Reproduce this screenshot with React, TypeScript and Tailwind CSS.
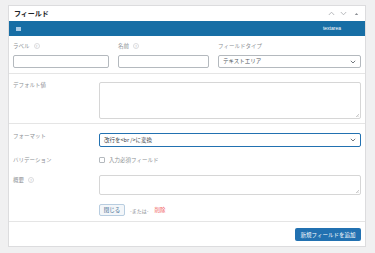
import React from 'react';

const font = { fontFamily: '"Noto Sans CJK JP", "Liberation Sans", sans-serif' };

function Help() {
  return (
    <span className="ml-[4px] inline-flex h-[6px] w-[6px] items-center justify-center rounded-full border border-[#dcdcde] text-[4px] leading-none text-[#b4b9be]">
      ?
    </span>
  );
}

function Chevron() {
  return (
    <svg width="6" height="4" viewBox="0 0 6 4" className="shrink-0">
      <path d="M0.8 0.8 L3 3 L5.2 0.8" fill="none" stroke="#50575e" strokeWidth="0.8" />
    </svg>
  );
}

export default function App() {
  return (
    <div className="min-h-[253px] w-[375px] bg-[#f0f0f1] pt-[5px]" style={font}>
      <div className="ml-[8px] w-[358px] border border-[#dcdcde] bg-white">
        {/* Header */}
        <div className="flex h-[15px] items-center justify-between pl-[5px] pr-[6px]">
          <span className="text-[7px] font-semibold text-[#1d2327]">フィールド</span>
          <div className="flex items-center gap-[5px] text-[#8c8f94]">
            <svg width="7" height="5" viewBox="0 0 7 5">
              <path d="M0.8 4 L3.5 1.2 L6.2 4" fill="none" stroke="#a7aaad" strokeWidth="0.8" />
            </svg>
            <svg width="7" height="5" viewBox="0 0 7 5">
              <path d="M0.8 1 L3.5 3.8 L6.2 1" fill="none" stroke="#a7aaad" strokeWidth="0.8" />
            </svg>
            <svg width="5" height="4" viewBox="0 0 5 4" className="ml-[2px]">
              <path d="M0.8 3 L2.5 1 L4.2 3 Z" fill="#8c8f94" />
            </svg>
          </div>
        </div>

        {/* Blue field bar */}
        <div className="flex h-[15px] items-center justify-between bg-[#176ea5] pl-[7px] pr-[24px]">
          <span className="h-[4px] w-[5px] bg-[#a9cbe6]" />
          <span className="text-[5px] text-white" style={{ fontFamily: '"Liberation Sans", sans-serif' }}>
            textarea
          </span>
        </div>

        {/* Top row */}
        <div className="flex gap-[9px] border-b border-[#e5e5e5] pb-[5px] pl-[4px] pr-[4px] pt-[6px]">
          <div className="w-[96px]">
            <div className="flex h-[8px] items-center text-[5.5px] text-[#8c8f94]">
              ラベル<Help />
            </div>
            <div className="mt-[5px] h-[13px] rounded-[2px] border border-[#b4b9be]" />
          </div>
          <div className="w-[91px]">
            <div className="flex h-[8px] items-center text-[5.5px] text-[#8c8f94]">
              名前<Help />
            </div>
            <div className="mt-[5px] h-[13px] rounded-[2px] border border-[#b4b9be]" />
          </div>
          <div className="w-[143px]">
            <div className="flex h-[8px] items-center text-[5.5px] text-[#8c8f94]">フィールドタイプ</div>
            <div className="mt-[5px] flex h-[13px] items-center justify-between rounded-[2px] border border-[#b4b9be] pl-[4px] pr-[4px] text-[5.5px] text-[#50575e]">
              テキストエリア
              <Chevron />
            </div>
          </div>
        </div>

        {/* Default value */}
        <div className="flex border-b border-[#e5e5e5] pb-[4px] pl-[4px] pr-[4px] pt-[6px]">
          <div className="w-[86px] pt-[1px] text-[5.5px] leading-[8px] text-[#8c8f94]">デフォルト値</div>
          <div className="relative mt-[2px] h-[37px] w-[262px] rounded-[2px] border border-[#d6d6d6]">
            <svg width="4" height="4" viewBox="0 0 4 4" className="absolute bottom-[1px] right-[1px]">
              <path d="M1 4 L4 1 M2.5 4 L4 2.5" stroke="#999" strokeWidth="0.5" />
            </svg>
          </div>
        </div>

        {/* Format */}
        <div className="flex pl-[4px] pr-[4px] pt-[7px]">
          <div className="w-[86px] pt-[1px] text-[5.5px] leading-[8px] text-[#8c8f94]">フォーマット</div>
          <div className="mt-[2px] flex h-[14px] w-[262px] items-center justify-between rounded-[2px] border border-[#2271b1] pl-[4px] pr-[4px] text-[5.5px] text-[#3c434a]">
            改行を&lt;br /&gt;に変換
            <Chevron />
          </div>
        </div>

        {/* Validation */}
        <div className="flex items-center pl-[4px] pr-[4px] pt-[9px]">
          <div className="w-[86px] text-[5.5px] leading-[8px] text-[#8c8f94]">バリデーション</div>
          <div className="flex items-center text-[5.5px] text-[#8c8f94]">
            <span className="h-[6px] w-[6px] rounded-[1px] border border-[#b4b9be]" />
            <span className="ml-[4px]">入力必須フィールド</span>
          </div>
        </div>

        {/* Description */}
        <div className="flex pl-[4px] pr-[4px] pt-[12px]">
          <div className="flex h-[8px] w-[86px] items-center text-[5.5px] text-[#8c8f94]">
            概要<Help />
          </div>
          <div className="relative mt-[-1px] h-[20px] w-[262px] rounded-[2px] border border-[#d6d6d6]">
            <svg width="4" height="4" viewBox="0 0 4 4" className="absolute bottom-[1px] right-[1px]">
              <path d="M1 4 L4 1 M2.5 4 L4 2.5" stroke="#999" strokeWidth="0.5" />
            </svg>
          </div>
        </div>

        {/* Close / delete */}
        <div className="flex items-center border-b border-[#e5e5e5] pb-[5px] pl-[90px] pt-[9px]">
          <span className="flex h-[12px] w-[26px] items-center justify-center rounded-[2px] border border-[#b8cde0] bg-[#f3f6f9] text-[5.5px] text-[#3d6a91]">
            閉じる
          </span>
          <span className="ml-[5px] text-[5px] text-[#8c8f94]">-または-</span>
          <span className="ml-[6px] text-[5.5px] text-[#f0585a]">削除</span>
        </div>

        {/* Footer */}
        <div className="flex justify-end pb-[5px] pr-[4px] pt-[6px]">
          <span className="flex h-[13px] w-[66px] items-center justify-center rounded-[2px] bg-[#2271b1] text-[5.5px] text-white">
            新規フィールドを追加
          </span>
        </div>
      </div>
    </div>
  );
}
